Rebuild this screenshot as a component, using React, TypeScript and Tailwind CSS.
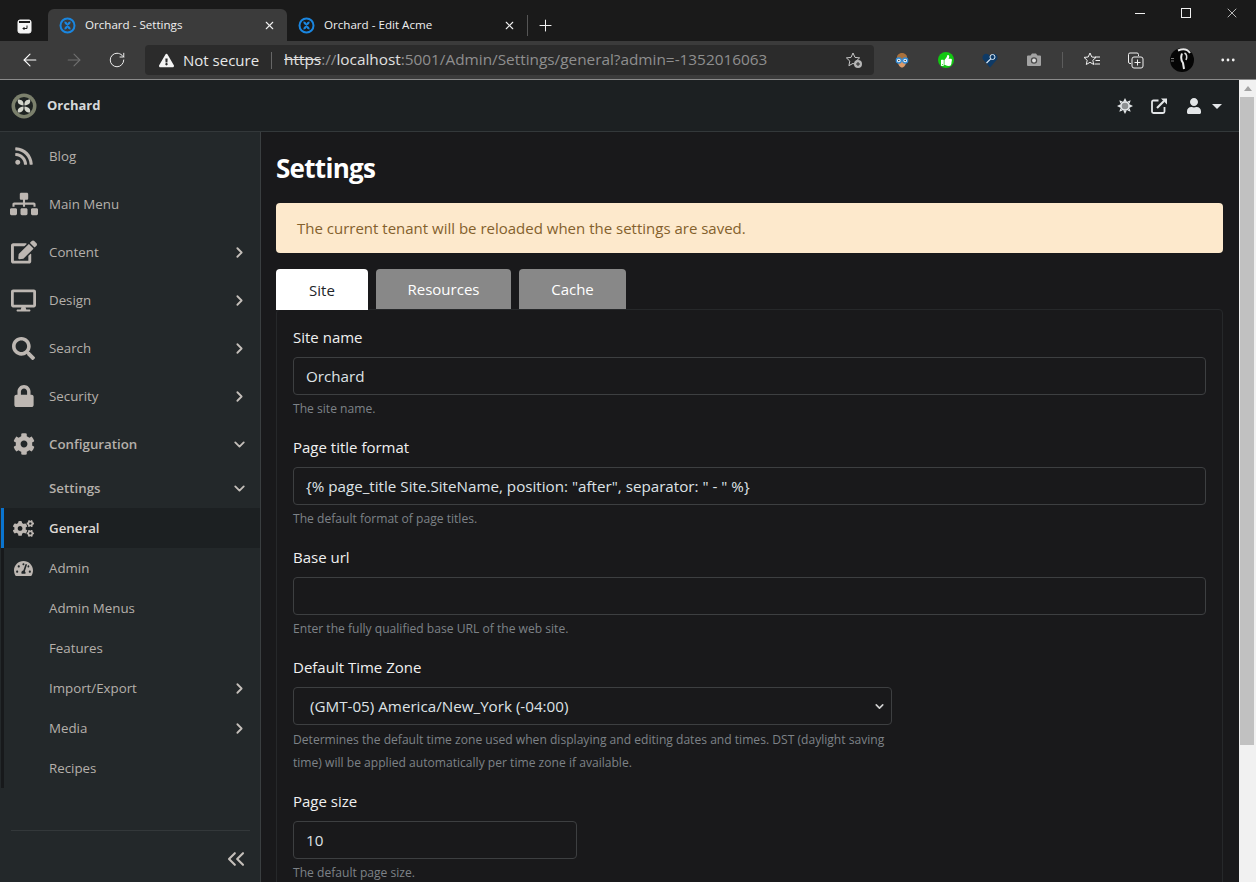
import { ArrowLeft, ArrowRight, RotateCw, X, Plus, MoreHorizontal, ChevronRight, ChevronDown, ChevronsLeft } from "lucide-react";
import {
  FaRss,
  FaSitemap,
  FaEdit,
  FaDesktop,
  FaSearch,
  FaLock,
  FaCog,
  FaCogs,
  FaTachometerAlt,
  FaUser,
  FaExclamationTriangle,
  FaThumbsUp,
} from "react-icons/fa";

const font = "font-['Open_Sans','Noto_Sans',sans-serif]";

function TabLogo() {
  return (
    <svg width="17" height="17" viewBox="0 0 17 17" className="shrink-0">
      <circle cx="8.5" cy="8.5" r="7" fill="none" stroke="#1a86e0" strokeWidth="2" />
      <path d="M8.5 8.5C6 7.5 5 6 5.5 4.500 7.5 4.500 9 6 8.5 8.5ZM8.5 8.5C11 7.5 12 6 11.5 4.500 9.5 4.500 8 6 8.5 8.5ZM8.5 8.5C6 9.5 5 11 5.5 12.500 7.5 12.500 9 11 8.5 8.5ZM8.5 8.5C11 9.5 12 11 11.5 12.500 9.5 12.500 8 11 8.5 8.5Z" fill="#1a86e0" />
    </svg>
  );
}

function BrowserTab({ title, active, width }: { title: string; active?: boolean; width: string }) {
  return (
    <div className={`flex h-[32px] items-center rounded-t-[6px] pl-[11px] pr-[11px] ${width} ${active ? "bg-[#3b3b3b]" : ""}`}>
      <TabLogo />
      <span className="ml-[9px] flex-1 truncate text-[11.600px] text-[#f0f0f0]">{title}</span>
      <X size={13} strokeWidth={2} className="text-[#f0f0f0]" />
    </div>
  );
}

function BrowserChrome() {
  return (
    <div className="shrink-0">
      <div className="flex h-[41px] items-end bg-[#1a1a1a] pl-[1px]">
        <div className="mb-[7px] flex w-[47px] items-center justify-center">
          <svg width="15" height="15" viewBox="0 0 15 15">
            <rect x="1" y="1" width="13" height="13" rx="2" fill="#f4f4f4" stroke="#f4f4f4" />
            <rect x="2" y="2" width="11" height="2" fill="#1a1a1a" />
            <path d="M10 6.500V9.500H6M7.500 8 6 9.500 7.500 11" fill="none" stroke="#1a1a1a" />
          </svg>
        </div>
        <BrowserTab title="Orchard - Settings" active width="w-[239px]" />
        <BrowserTab title="Orchard - Edit Acme" width="w-[240px]" />
        <div className="mb-[5px] h-[21px] w-px bg-[#555]" />
        <Plus size={19} strokeWidth={1.300} className="mb-[6px] ml-[8px] text-[#f0f0f0]" />
        <div className="flex-1" />
        <div className="mb-[20px] mr-[1px] flex items-center text-[#f0f0f0]">
          <div className="flex w-[46px] justify-center"><div className="h-px w-[10px] bg-[#f0f0f0]" /></div>
          <div className="flex w-[46px] justify-center"><div className="h-[10px] w-[10px] border border-[#f0f0f0]" /></div>
          <div className="flex w-[46px] justify-center"><X size={16} strokeWidth={1.100} /></div>
        </div>
      </div>
      <div className="flex h-[39px] items-center border-b border-[#8a8a8a] bg-[#3b3b3b] pl-[1px]">
        <div className="flex w-[144px] items-center text-white">
          <ArrowLeft size={20} strokeWidth={1.300} className="ml-[19px]" />
          <ArrowRight size={20} strokeWidth={1.300} className="ml-[24px] text-[#707070]" />
          <RotateCw size={18} strokeWidth={1.300} className="ml-[24px] text-[#f0f0f0]" />
        </div>
        <div className="flex h-[30px] w-[729px] items-center rounded-[4px] bg-[#2b2b2b] pl-[14px] text-[15px]">
          <FaExclamationTriangle size={15} className="text-[#f4f4f4]" />
          <span className="ml-[9px] text-[#e8e8e8]">Not secure</span>
          <div className="ml-[12px] h-[17px] w-px bg-[#666]" />
          <div className="ml-[12px] text-[15.350px]">
            <span className="text-[#e0e0e0] line-through decoration-[#e0e0e0]">https</span>
            <span className="text-[#8f8f8f]">://</span>
            <span className="text-[#e0e0e0]">localhost</span>
            <span className="text-[#8f8f8f]">:5001/Admin/Settings/general?admin=-1352016063</span>
          </div>
          <div className="flex-1" />
          <svg width="18" height="18" viewBox="0 0 18 18" className="mr-[11px]">
            <path d="M8 2l2 4.400 4.600.5-3.400 3.200.9 4.600L8 12.400 3.900 14.700l.9-4.600L1.400 6.900 6 6.400Z" fill="none" stroke="#c8c8c8" strokeWidth="1" />
            <circle cx="13" cy="13" r="4" fill="#b5b5b5" />
            <path d="M13 11v4M11 13h4" stroke="#2b2b2b" strokeWidth="1" />
          </svg>
        </div>
        <div className="flex flex-1 items-center">
          <svg width="16" height="16" viewBox="0 0 16 16" className="ml-[20px]">
            <path d="M3 8C2 3 5 1 8 1s6 2 5 7l-10 0Z" fill="#a8703c" />
            <path d="M3.500 9C4 13 6 15.500 8 15.500S12 13 12.500 9Z" fill="#dc9a68" />
            <circle cx="4.800" cy="8.500" r="2.500" fill="#eef6fc" stroke="#2f8ad6" strokeWidth="1.300" />
            <circle cx="11.200" cy="8.500" r="2.500" fill="#eef6fc" stroke="#2f8ad6" strokeWidth="1.300" />
            <circle cx="4.800" cy="8.500" r="0.800" fill="#333" />
            <circle cx="11.200" cy="8.500" r="0.800" fill="#333" />
          </svg>
          <div className="ml-[28px] flex h-[16px] w-[16px] items-center justify-center rounded-full bg-[#12c812]">
            <FaThumbsUp size={11} className="text-white" />
          </div>
          <svg width="16" height="16" viewBox="0 0 16 16" className="ml-[28px]">
            <path d="M8 15.500 1 7.500C-1 4 3 0 6.500 2.500L8 4l1.500-1.500C13 0 17 4 15 7.500Z" fill="#0e3a66" />
            <circle cx="10.500" cy="5" r="2.500" fill="none" stroke="#dbe9f5" strokeWidth="1" />
            <path d="M8.700 6.800 4.500 11" stroke="#dbe9f5" strokeWidth="1.200" />
          </svg>
          <svg width="16" height="16" viewBox="0 0 16 16" className="ml-[28px]">
            <path d="M1 4.500Q1 3.500 2 3.500H4.500L6 1.500H10L11.500 3.500H14Q15 3.500 15 4.500V13Q15 14 14 14H2Q1 14 1 13Z" fill="#a3a3a3" />
            <circle cx="8" cy="8.500" r="3.200" fill="#4a4a4a" />
            <circle cx="8" cy="8.500" r="1.900" fill="#e0e0e0" />
          </svg>
          <div className="ml-[20px] h-[16px] w-px bg-[#5c5c5c]" />
          <svg width="18" height="18" viewBox="0 0 18 18" className="ml-[20px]">
            <path d="M7 2l1.800 4 4.200.4-3.200 2.900.9 4.200L7 11.300 3.300 13.500l.9-4.200L1 6.400l4.200-.4Z" fill="none" stroke="#f0f0f0" strokeWidth="1" />
            <path d="M12 6h5M12.500 9.500h4.500M11.500 13h5.500" stroke="#f0f0f0" strokeWidth="1" />
          </svg>
          <svg width="18" height="18" viewBox="0 0 18 18" className="ml-[26px]">
            <path d="M4 12.500H3Q1.500 12.500 1.500 11V3.500Q1.500 2 3 2H10Q11.500 2 11.500 3.500V5" fill="none" stroke="#f0f0f0" strokeWidth="1" />
            <rect x="5" y="6" width="11" height="11" rx="2" fill="none" stroke="#f0f0f0" strokeWidth="1" />
            <path d="M10.500 8.500v6M7.500 11.500h6" stroke="#f0f0f0" strokeWidth="1" />
          </svg>
          <svg width="24" height="24" viewBox="0 0 24 24" className="ml-[25px]">
            <circle cx="12" cy="12" r="12" fill="#050505" />
            <path d="M8 2.500Q16 -1 20 5M12 5.500Q10 11 13 15L14 21" fill="none" stroke="#e8e8e8" strokeWidth="2" />
            <path d="M14.500 5Q18 7 16 12" fill="none" stroke="#d8d8d8" strokeWidth="1.500" />
            <path d="M1 10.500h3M1 13h3" stroke="#777" strokeWidth="1" />
          </svg>
          <MoreHorizontal size={18} strokeWidth={1.700} className="ml-[25px] text-[#f0f0f0]" />
        </div>
      </div>
    </div>
  );
}

function SunIcon() {
  return (
    <svg width="16" height="16" viewBox="0 0 16 16">
      <path
        d="M8 0 9.500 3H6.500ZM8 16 6.500 13H9.500ZM0 8 3 6.500V9.500ZM16 8 13 9.500V6.500ZM2.300 2.300 5.500 3.400 3.400 5.500ZM13.700 13.700 10.500 12.600 12.600 10.500ZM13.700 2.300 12.600 5.500 10.500 3.400ZM2.300 13.700 3.400 10.500 5.500 12.600Z"
        fill="#e3e6e8"
      />
      <circle cx="8" cy="8" r="4.200" fill="#8d9092" stroke="#e3e6e8" strokeWidth="1.800" />
    </svg>
  );
}

function SquareLink() {
  return (
    <svg width="16" height="16" viewBox="0 0 16 16">
      <path d="M7.500 2.500H2.500Q1 2.500 1 4V13.500Q1 15 2.500 15H12Q13.500 15 13.500 13.500V9" fill="none" stroke="#e3e6e8" strokeWidth="1.800" />
      <path d="M10 0.500H16V6.500Z" fill="#e3e6e8" />
      <path d="M13 3 6 10" stroke="#e3e6e8" strokeWidth="2.200" />
    </svg>
  );
}

function OrchardLogo() {
  return (
    <svg width="26" height="26" viewBox="0 0 26 26">
      <circle cx="13" cy="13" r="12.500" fill="#7b806c" />
      <circle cx="13" cy="13" r="9" fill="#1e2322" />
      <path d="M12.500 12.500C8 12 6 10 7 6.500 11 6.500 13 8.500 12.500 12.500ZM13.500 12.500C18 12 20 10 19 6.500 15 6.500 13 8.500 13.500 12.500ZM12.500 13.500C8 14 6 16 7 19.500 11 19.500 13 17.500 12.500 13.500ZM13.500 13.500C18 14 20 16 19 19.500 15 19.500 13 17.500 13.500 13.500Z" fill="#d4d6cc" />
    </svg>
  );
}

type Item = {
  label: string;
  icon?: React.ReactNode;
  arrow?: "right" | "down";
  h: string;
  bold?: boolean;
  active?: boolean;
  strip?: boolean;
};

const iconColor = "text-[#bdb7b2]";

const items: Item[] = [
  { label: "Blog", icon: <FaRss size={20} />, h: "h-[48px]" },
  { label: "Main Menu", icon: <FaSitemap size={28} />, h: "h-[48px]" },
  { label: "Content", icon: <FaEdit size={26} />, arrow: "right", h: "h-[48px]" },
  { label: "Design", icon: <FaDesktop size={25} />, arrow: "right", h: "h-[48px]" },
  { label: "Search", icon: <FaSearch size={23} />, arrow: "right", h: "h-[48px]" },
  { label: "Security", icon: <FaLock size={22} />, arrow: "right", h: "h-[48px]" },
  { label: "Configuration", icon: <FaCog size={22} />, arrow: "down", h: "h-[48px]", bold: true },
  { label: "Settings", arrow: "down", h: "h-[40px]", bold: true },
  { label: "General", icon: <FaCogs size={21} />, h: "h-[40px]", bold: true, active: true, strip: true },
  { label: "Admin", icon: <FaTachometerAlt size={19} />, h: "h-[40px]", strip: true },
  { label: "Admin Menus", h: "h-[40px]", strip: true },
  { label: "Features", h: "h-[40px]", strip: true },
  { label: "Import/Export", arrow: "right", h: "h-[40px]", strip: true },
  { label: "Media", arrow: "right", h: "h-[40px]", strip: true },
  { label: "Recipes", h: "h-[40px]", strip: true },
];

function SideRow({ item }: { item: Item }) {
  return (
    <div className={`flex items-center ${item.h} ${item.active ? "bg-[#1c2022]" : ""}`}>
      <div className={`h-full w-[3px] shrink-0 ${item.active ? "bg-[#0a74cf]" : item.strip ? "bg-[#17191b]" : ""}`} />
      <div className={`mr-[6px] flex w-[39px] shrink-0 items-center justify-center ${iconColor}`}>{item.icon}</div>
      <span className={`flex-1 pt-[2px] text-[13.300px] ${item.bold ? "font-semibold" : ""} ${item.active ? "text-[#dcd8d4]" : "text-[#b5b0ab]"}`}>
        {item.label}
      </span>
      {item.arrow === "right" && <ChevronRight size={17} strokeWidth={2.600} className="mr-[12px] text-[#c4bfba]" />}
      {item.arrow === "down" && <ChevronDown size={17} strokeWidth={2.600} className="mr-[12px] text-[#c4bfba]" />}
    </div>
  );
}

function Sidebar() {
  return (
    <aside className="flex w-[261px] shrink-0 flex-col border-r border-[#3a3e40] bg-[#23282a] pl-px">
      <nav className="flex flex-col">
        {items.map((item) => (
          <SideRow key={item.label} item={item} />
        ))}
      </nav>
      <div className="mx-[10px] mt-[42px] flex flex-1 justify-end border-t border-[#33383a] pt-[14px]">
        <ChevronsLeft size={28} strokeWidth={1.800} className="text-[#c4bfba]" />
      </div>
    </aside>
  );
}

function Field({
  label,
  hint,
  value,
  width,
}: {
  label: string;
  hint: React.ReactNode;
  value?: string;
  width?: string;
}) {
  return (
    <div className="mb-[16px]">
      <div className="mb-[9px] h-[22px] text-[15px] leading-[22px] text-[#f0f0f0]">{label}</div>
      <div className={`flex h-[38px] items-center rounded-[4px] border border-[#3d3f41] pl-[12px] pt-px text-[15.200px] text-[#dee2e6] ${width ?? "w-full"}`}>
        {value}
      </div>
      <div className="mt-[2px] text-[12.100px] leading-[23px] text-[#7d8287]">{hint}</div>
    </div>
  );
}

function TabButton({ label, active, width }: { label: string; active?: boolean; width: string }) {
  return (
    <div
      className={`flex items-center justify-center rounded-t-[4px] text-[15px] ${width} ${
        active ? "relative z-10 h-[41px] bg-white pt-[2px] text-[#212529]" : "h-[40px] bg-[#888888] text-white"
      }`}
    >
      {label}
    </div>
  );
}

function Content() {
  return (
    <main className="flex-1 overflow-hidden bg-[#19191b] pl-[15px] pr-[16px]">
      <h1 className="mt-[17px] h-[38px] text-[26px] font-bold leading-[38px] tracking-[-0.7px] text-white">Settings</h1>
      <div className="mt-[16px] flex h-[50px] items-center rounded-[4px] bg-[#fde9cc] pl-[21px] text-[15px] text-[#84612c]">
        The current tenant will be reloaded when the settings are saved.
      </div>
      <div className="mt-[16px] flex items-start gap-[8px]">
        <TabButton label="Site" active width="w-[92px]" />
        <TabButton label="Resources" width="w-[135px]" />
        <TabButton label="Cache" width="w-[107px]" />
      </div>
      <div className="-mt-[1px] rounded-[4px] border border-[#26282a] px-[16px] pt-[16px]">
        <Field label="Site name" value="Orchard" hint="The site name." />
        <Field
          label="Page title format"
          value={'{% page_title Site.SiteName, position: "after", separator: " - " %}'}
          hint="The default format of page titles."
        />
        <Field label="Base url" hint="Enter the fully qualified base URL of the web site." />
        <div className="mb-[16px]">
          <div className="mb-[9px] h-[22px] text-[15px] leading-[22px] text-[#f0f0f0]">Default Time Zone</div>
          <div className="flex h-[38px] w-[599px] items-center justify-between rounded-[4px] border border-[#3d3f41] pl-[16px] pr-[5px] pt-px text-[15.200px] text-[#dee2e6]">
            (GMT-05) America/New_York (-04:00)
            <ChevronDown size={13} strokeWidth={3} className="text-[#d0d0d0]" />
          </div>
          <div className="mt-[3px] w-[599px] text-[12.100px] leading-[23px] text-[#7d8287]">
            Determines the default time zone used when displaying and editing dates and times. DST (daylight saving
            time) will be applied automatically per time zone if available.
          </div>
        </div>
        <Field label="Page size" value="10" hint="The default page size." width="w-[284px]" />
      </div>
    </main>
  );
}

function Scrollbar() {
  return (
    <div className="flex w-[17px] shrink-0 flex-col bg-[#f1f1f1]">
      <div className="flex h-[17px] items-center justify-center">
        <div className="h-0 w-0 border-x-[4px] border-b-[5px] border-x-transparent border-b-[#a3a3a3]" />
      </div>
      <div className="ml-px h-[648px] w-[14px] bg-[#c1c1c1]" />
    </div>
  );
}

export default function App() {
  return (
    <div className={`flex h-[882px] w-[1256px] flex-col overflow-hidden bg-[#1a1a1a] ${font}`}>
      <BrowserChrome />
      <div className="flex min-h-0 flex-1">
        <div className="flex min-w-0 flex-1 flex-col">
          <header className="flex h-[52px] shrink-0 items-center border-b border-[#33383a] bg-[#1c2022] pl-[11px] pt-px">
            <OrchardLogo />
            <span className="ml-[10px] text-[13px] font-bold text-[#d6d9db]">Orchard</span>
            <div className="flex-1" />
            <SunIcon />
            <div className="ml-[18px]">
              <SquareLink />
            </div>
            <FaUser size={16} className="ml-[19px] text-[#e3e6e8]" />
            <div className="ml-[10px] mr-[17px] h-0 w-0 border-x-[5px] border-t-[5px] border-x-transparent border-t-[#e3e6e8]" />
          </header>
          <div className="flex min-h-0 flex-1">
            <Sidebar />
            <Content />
          </div>
        </div>
        <Scrollbar />
      </div>
    </div>
  );
}
